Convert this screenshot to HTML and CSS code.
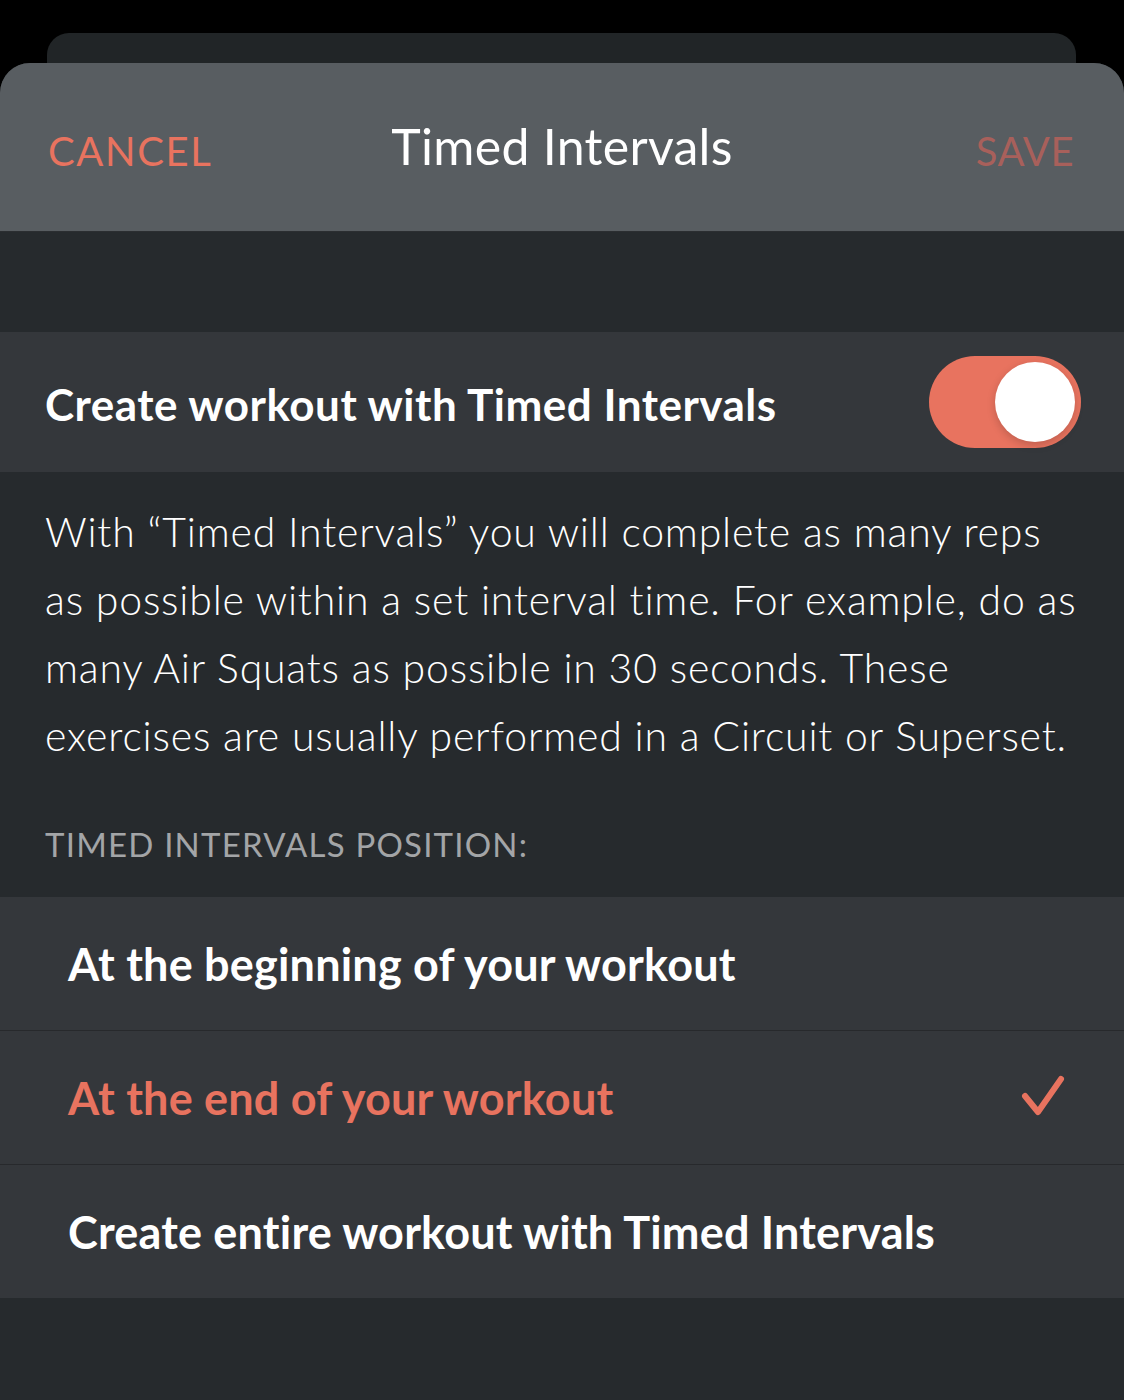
FILE: index.html
```html
<!DOCTYPE html>
<html>
<head>
<meta charset="utf-8">
<link rel="stylesheet" href="styles.css">
</head>
<body>
<div class="back-card"></div>
<div class="sheet">
  <header class="header">
    <span class="cancel">CANCEL</span>
    <h1 class="title">Timed Intervals</h1>
    <span class="save">SAVE</span>
  </header>
  <div class="spacer"></div>
  <div class="toggle-row">
    <span class="toggle-label">Create workout with Timed Intervals</span>
    <div class="switch"><div class="knob"></div></div>
  </div>
  <p class="desc">With “Timed Intervals” you will complete as many reps<br>as possible within a set interval time. For example, do as<br>many Air Squats as possible in 30 seconds. These<br>exercises are usually performed in a Circuit or Superset.</p>
  <div class="section-title">TIMED INTERVALS POSITION:</div>
  <ul class="options">
    <li class="option">At the beginning of your workout</li>
    <li class="option selected">At the end of your workout
      <svg class="check" width="48" height="48" viewBox="0 0 48 48"><path d="M5 21 L18 37 L41 4" fill="none" stroke="#e8735f" stroke-width="6" stroke-linecap="round" stroke-linejoin="round"/></svg>
    </li>
    <li class="option">Create entire workout with Timed Intervals</li>
  </ul>
</div>
</body>
</html>
```

FILE: styles.css
```css
* { box-sizing: border-box; }
html, body { margin: 0; padding: 0; }
body {
  background: #000;
  width: 1124px;
  height: 1400px;
  overflow: hidden;
  font-family: "Lato", "Open Sans", sans-serif;
}
.back-card {
  margin: 33px 48px 0 47px;
  height: 30px;
  background: #212527;
  border-radius: 22px 22px 0 0;
}
.sheet {
  background: #262a2d;
  border-radius: 30px 30px 0 0;
  overflow: hidden;
  height: 1337px;
}
.header {
  height: 169px;
  background: #585d61;
  border-bottom: 1px solid #2b2e31;
  display: flex;
  align-items: center;
  justify-content: space-between;
  padding: 0 50px 0 48px;
  position: relative;
}
.cancel, .save {
  font-size: 40px;
  margin-top: 8px;
}
.cancel { color: #e8735f; letter-spacing: 1.6px; }
.save { color: #a8605b; letter-spacing: 0.5px; }
.title {
  margin: 0;
  font-size: 50px;
  font-weight: 400;
  color: #fff;
  position: absolute;
  left: 0;
  right: 0;
  text-align: center;
  letter-spacing: 0.3px;
  margin-top: -2px;
  pointer-events: none;
}
.spacer { height: 100px; }
.toggle-row {
  height: 140px;
  background: #34373b;
  display: flex;
  align-items: center;
  justify-content: space-between;
  padding: 0 43px 0 45px;
}
.toggle-label {
  color: #fff;
  font-size: 44px;
  font-weight: 700;
  letter-spacing: 0.5px;
  margin-top: 4px;
}
.switch {
  width: 152px;
  height: 92px;
  border-radius: 46px;
  background: #e8735f;
  display: flex;
  align-items: center;
  justify-content: flex-end;
  padding-right: 6px;
}
.knob {
  width: 80px;
  height: 80px;
  border-radius: 50%;
  background: #fff;
  box-shadow: 0 3px 8px rgba(0,0,0,0.18);
}
.desc {
  margin: 0;
  padding: 26px 0 0 45px;
  color: #fff;
  font-size: 41px;
  font-weight: 300;
  letter-spacing: 0.8px;
  line-height: 68px;
}
.section-title {
  padding: 48px 0 0 45px;
  height: 127px;
  color: #a3a5a7;
  font-size: 33px;
  letter-spacing: 1.2px;
  line-height: 52px;
}
.options {
  list-style: none;
  margin: 0;
  padding: 0;
}
.option {
  height: 134px;
  background: #34373b;
  border-bottom: 1px solid #27292c;
  display: flex;
  align-items: center;
  justify-content: space-between;
  padding: 0 56px 0 68px;
  color: #fff;
  font-size: 45px;
  font-weight: 700;
  letter-spacing: 0.2px;
}
.option:last-child { border-bottom: none; height: 133px; }
.option.selected { color: #e8735f; }
.check { margin-top: 2px; }
```
